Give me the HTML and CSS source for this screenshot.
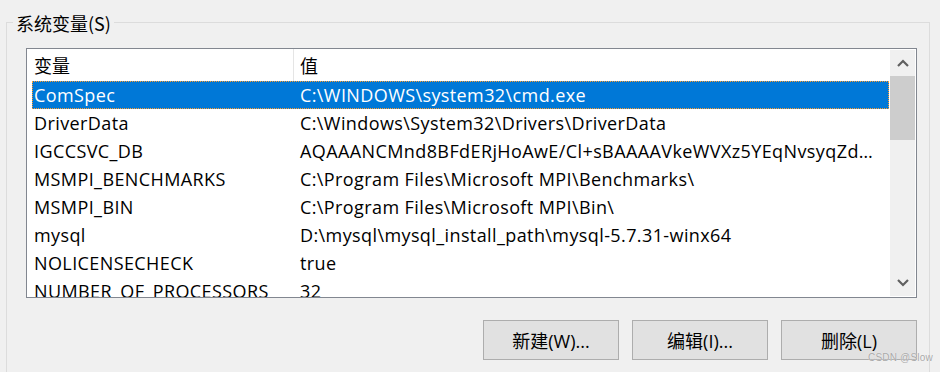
FILE: index.html
```html
<!DOCTYPE html>
<html lang="zh-CN">
<head>
    <meta charset="UTF-8">
    <title>系统变量</title>
    <link rel="stylesheet" href="styles.css">
</head>
<body>

<div class="group">
    <span class="group-title">系统变量(S)</span>

    <div class="listbox">
        <div class="list-main">
            <div class="list-header">
                <div class="col-name">变量</div>
                <div class="col-value">值</div>
            </div>
            <div class="rows">
                <div class="row selected">
                    <div class="col-name">ComSpec</div>
                    <div class="col-value">C:\WINDOWS\system32\cmd.exe</div>
                </div>
                <div class="row">
                    <div class="col-name">DriverData</div>
                    <div class="col-value">C:\Windows\System32\Drivers\DriverData</div>
                </div>
                <div class="row">
                    <div class="col-name">IGCCSVC_DB</div>
                    <div class="col-value">AQAAANCMnd8BFdERjHoAwE/Cl+sBAAAAVkeWVXz5YEqNvsyqZdWQHsnPZgAAAAAACAAAA</div>
                </div>
                <div class="row">
                    <div class="col-name">MSMPI_BENCHMARKS</div>
                    <div class="col-value">C:\Program Files\Microsoft MPI\Benchmarks\</div>
                </div>
                <div class="row">
                    <div class="col-name">MSMPI_BIN</div>
                    <div class="col-value">C:\Program Files\Microsoft MPI\Bin\</div>
                </div>
                <div class="row">
                    <div class="col-name">mysql</div>
                    <div class="col-value">D:\mysql\mysql_install_path\mysql-5.7.31-winx64</div>
                </div>
                <div class="row">
                    <div class="col-name">NOLICENSECHECK</div>
                    <div class="col-value">true</div>
                </div>
                <div class="row">
                    <div class="col-name">NUMBER_OF_PROCESSORS</div>
                    <div class="col-value">32</div>
                </div>
            </div>
        </div>

        <div class="scrollbar">
            <div class="scroll-btn">
                <svg width="12" height="8" viewBox="0 0 12 8"><polyline points="1,7 6,2 11,7" fill="none" stroke="#606060" stroke-width="2.2"/></svg>
            </div>
            <div class="scroll-thumb"></div>
            <div class="scroll-track"></div>
            <div class="scroll-btn">
                <svg width="12" height="8" viewBox="0 0 12 8"><polyline points="1,1 6,6 11,1" fill="none" stroke="#606060" stroke-width="2.2"/></svg>
            </div>
        </div>
    </div>

    <div class="buttons">
        <button>新建(W)...</button>
        <button>编辑(I)...</button>
        <button>删除(L)</button>
    </div>
</div>

<span class="watermark">CSDN @Slow</span>

</body>
</html>
```

FILE: styles.css
```css
body {
    margin: 0;
    background-color: #f0f0f0;
    font-family: "Open Sans", "Noto Sans CJK SC", sans-serif;
    color: #000;
    overflow: hidden;
}
.group {
    position: relative;
    margin: 22px 0 0 6px;
    width: 924px;
    height: 400px;
    border: 1px solid #dcdcdc;
    padding: 25px 0 0 19px;
    box-sizing: border-box;
}
.group-title {
    position: absolute;
    left: 6px;
    top: -12px;
    padding: 0 3px;
    background-color: #f0f0f0;
    font-family: "Noto Sans CJK SC", sans-serif;
    font-size: 18px;
    line-height: 24px;
}
.listbox {
    display: flex;
    width: 891px;
    height: 250px;
    border: 1px solid #828790;
    background-color: #fff;
    box-sizing: border-box;
}
.list-main {
    width: 862px;
    display: flex;
    flex-direction: column;
    overflow: hidden;
    font-size: 18px;
    letter-spacing: 0.4px;
}
.list-header {
    display: flex;
    height: 32px;
    line-height: 32px;
    flex-shrink: 0;
    letter-spacing: 0;
}
.list-header .col-name {
    width: 267px;
    padding-left: 7px;
    border-right: 1px solid #e5e5e5;
    box-sizing: border-box;
    font-family: "Noto Sans CJK SC", sans-serif;
}
.list-header .col-value {
    padding-left: 6px;
    font-family: "Noto Sans CJK SC", sans-serif;
}
.row {
    display: flex;
    height: 28px;
    line-height: 26px;
    margin-left: 5px;
    border: 1px solid transparent;
    box-sizing: border-box;
    flex-shrink: 0;
    white-space: nowrap;
}
.row .col-name {
    width: 260px;
    padding-left: 1px;
    box-sizing: border-box;
}
.row .col-value {
    flex: 1;
    min-width: 0;
    padding: 0 4px 0 7px;
    overflow: hidden;
    text-overflow: ellipsis;
}
.row.selected {
    background-color: #0078d7;
    border: 1px dotted #ff9d2e;
    color: #fff;
}
.scrollbar {
    width: 25px;
    margin: 1px;
    background-color: #f0f0f0;
    display: flex;
    flex-direction: column;
}
.scroll-btn {
    height: 26px;
    display: flex;
    align-items: center;
    justify-content: center;
    flex-shrink: 0;
}
.scroll-thumb {
    height: 64px;
    background-color: #cdcdcd;
}
.scroll-track {
    flex: 1;
}
.buttons {
    display: flex;
    justify-content: flex-end;
    gap: 13px;
    width: 891px;
    margin-top: 22px;
}
.buttons button {
    width: 136px;
    height: 40px;
    background-color: #e1e1e1;
    border: 1px solid #adadad;
    font-family: "Open Sans", "Noto Sans CJK SC", sans-serif;
    font-size: 18px;
    color: #000;
    padding: 0;
}
.watermark {
    position: absolute;
    left: 868px;
    top: 352px;
    font-family: "Liberation Sans", sans-serif;
    font-size: 10px;
    letter-spacing: 0.2px;
    color: #a8a8a8;
    text-shadow: 0 0 1px #fff;
}
```
